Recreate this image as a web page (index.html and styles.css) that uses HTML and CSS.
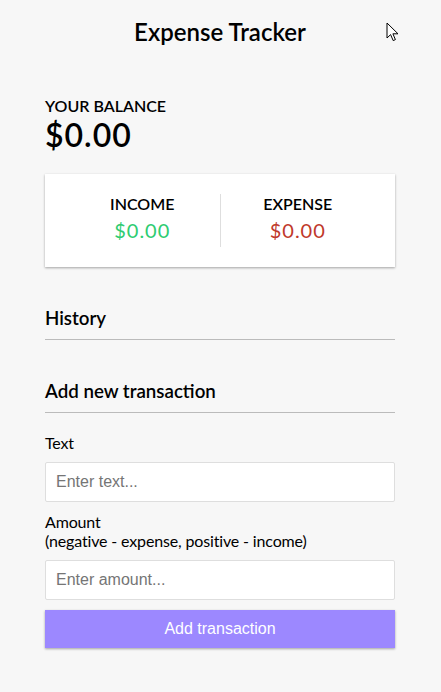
FILE: index.html
```html
<!DOCTYPE html>
<html lang="en">
<head>
<meta charset="UTF-8">
<title>Expense Tracker</title>
<link rel="stylesheet" href="styles.css">
</head>
<body>
  <h2 class="title">Expense Tracker</h2>
  <div class="container">
    <h4>Your Balance</h4>
    <h1 class="balance">$0.00</h1>

    <div class="inc-exp-container">
      <div class="inc">
        <h4>Income</h4>
        <p class="money plus">$0.00</p>
      </div>
      <div class="exp">
        <h4>Expense</h4>
        <p class="money minus">$0.00</p>
      </div>
    </div>

    <h3>History</h3>
    <ul class="list"></ul>

    <h3>Add new transaction</h3>
    <form class="form">
      <div class="form-control">
        <label for="text">Text</label>
        <input type="text" id="text" placeholder="Enter text...">
      </div>
      <div class="form-control">
        <label for="amount">Amount <br>(negative - expense, positive - income)</label>
        <input type="number" id="amount" placeholder="Enter amount...">
      </div>
      <button class="btn" type="button">Add transaction</button>
    </form>
  </div>

  <svg class="cursor" width="14" height="20" viewBox="0 0 14 20" aria-hidden="true">
    <path d="M1 1 L1 16 L4.6 12.6 L7.2 18.6 L9.4 17.6 L6.9 11.8 L12 11.8 Z" fill="#fff" stroke="#000" stroke-width="1" stroke-linejoin="miter"/>
  </svg>
</body>
</html>
```

FILE: styles.css
```css
* {
  box-sizing: border-box;
}

body {
  background-color: #f7f7f7;
  display: flex;
  flex-direction: column;
  align-items: center;
  justify-content: flex-start;
  min-height: 100vh;
  margin: 0;
  padding-right: 1px;
  font-family: "Lato", "Liberation Sans", sans-serif;
  color: #000;
}

h1, h2, h3, h4 {
  font-weight: 600;
}

.title {
  font-size: 24px;
  margin: 17px 0 20px;
  line-height: 29px;
}

.container {
  margin: 30px auto;
  width: 350px;
}

h1 {
  letter-spacing: 1px;
  margin: 0;
  font-size: 32px;
}

h3 {
  font-size: 18.72px;
  border-bottom: 1px solid #bbb;
  padding-bottom: 10px;
  margin: 40px 0 10px;
}

h4 {
  font-size: 16px;
  margin: 0;
  text-transform: uppercase;
}

.inc-exp-container {
  background-color: #fff;
  box-shadow: 0 1px 3px rgba(0, 0, 0, 0.12), 0 1px 2px rgba(0, 0, 0, 0.24);
  padding: 20px;
  display: flex;
  justify-content: space-between;
  margin: 20px 0;
}

.inc-exp-container > div {
  flex: 1;
  text-align: center;
}

.inc-exp-container > .inc {
  border-right: 1px solid #dedede;
}

.money {
  font-size: 20px;
  letter-spacing: 1px;
  margin: 5px 0;
}

.money.plus {
  color: #2ecc71;
}

.money.minus {
  color: #c0392b;
}

.list {
  list-style-type: none;
  padding: 0;
  margin: 0;
}

label {
  display: inline-block;
  margin: 10px 0;
  font-size: 16px;
  letter-spacing: -0.15px;
}

input[type="text"],
input[type="number"] {
  border: 1px solid #dedede;
  border-radius: 2px;
  display: block;
  font-size: 16px;
  font-family: "Liberation Sans", Arial, sans-serif;
  padding: 10px;
  width: 100%;
  background: #fff;
}

input::placeholder {
  color: #757575;
}

.btn {
  cursor: pointer;
  background-color: #9c88ff;
  box-shadow: 0 1px 3px rgba(0, 0, 0, 0.12), 0 1px 2px rgba(0, 0, 0, 0.24);
  color: #fff;
  border: 0;
  display: block;
  font-size: 16px;
  font-family: "Liberation Sans", Arial, sans-serif;
  margin: 10px 0 30px;
  padding: 10px;
  width: 100%;
}

.cursor {
  position: absolute;
  left: 386px;
  top: 22px;
}
```
